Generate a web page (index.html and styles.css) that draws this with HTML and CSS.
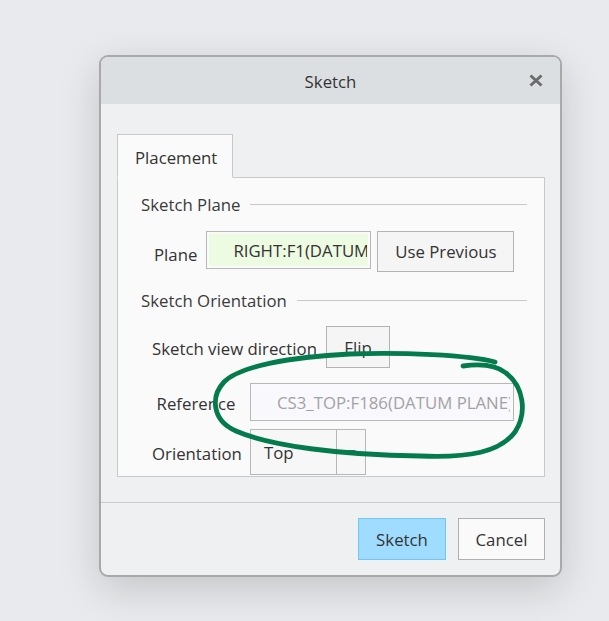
FILE: index.html
```html
<!DOCTYPE html>
<html>
<head>
<meta charset="utf-8">
<link rel="stylesheet" href="styles.css">
</head>
<body>
<div class="dialog">
  <div class="titlebar">
    <span></span>
    <span class="title">Sketch</span>
    <span class="close">
      <svg width="14" height="13" viewBox="0 0 14 13"><path d="M1.5 1.5 L12.5 11.5 M12.5 1.5 L1.5 11.5" stroke="#6b6b6b" stroke-width="3" fill="none"/></svg>
    </span>
  </div>
  <div class="content">
    <div class="tab">Placement</div>
    <div class="panel">
      <div class="section"><span>Sketch Plane</span><i class="rule"></i></div>
      <div class="row row-plane">
        <span class="label">Plane</span>
        <div class="field field-green"><span class="ftext">RIGHT:F1(DATUM PLANE)</span></div>
        <button class="btn btn-prev">Use Previous</button>
      </div>
      <div class="section sec2"><span>Sketch Orientation</span><i class="rule"></i></div>
      <div class="row row-flip">
        <span class="label">Sketch view direction</span>
        <button class="btn btn-flip">Flip</button>
      </div>
      <div class="grid">
        <span class="glabel lab-ref">Reference</span>
        <div class="field field-ref"><span class="ftext">CS3_TOP:F186(DATUM PLANE)</span></div>
        <span class="glabel">Orientation</span>
        <div class="select"><span class="sel-text">Top</span><span class="sel-arrow"><i class="tri"></i></span></div>
      </div>
    </div>
  </div>
  <div class="footer">
    <button class="btn btn-ok">Sketch</button>
    <button class="btn btn-cancel">Cancel</button>
  </div>
</div>
<svg class="ink" width="609" height="621" viewBox="0 0 609 621">
  <path d="M495 362 C470 355 400 352 350 354 C290 357 240 366 224 382 C211 396 211 420 236 431 C270 446 340 455 420 456 C470 458 500 452 515 432 C528 412 523 386 506 373 C495 364 478 364 463 366" fill="none" stroke="#037b4c" stroke-width="4.8" stroke-linecap="round" stroke-linejoin="round"/>
</svg>
</body>
</html>
```
FILE: styles.css
```css
* { box-sizing: border-box; }
html, body { margin: 0; padding: 0; }
body {
  width: 609px;
  height: 621px;
  overflow: hidden;
  background: #e9eaed;
  font-family: "Open Sans", "Noto Sans", sans-serif;
  font-size: 16.8px;
  color: #333;
}
.dialog {
  margin: 55px 0 0 99px;
  width: 463px;
  height: 522px;
  border: 2px solid #a9a9aa;
  border-radius: 9px;
  background: #eff0f2;
  box-shadow: 0 12px 40px rgba(0,0,0,0.16);
  overflow: hidden;
  display: flex;
  flex-direction: column;
}
.titlebar {
  height: 47px;
  background: #dcdfe1;
  display: grid;
  grid-template-columns: 1fr auto 1fr;
  align-items: center;
}
.title { color: #333; padding-top: 1px; }
.close { justify-self: end; padding-right: 17px; display: flex; }
.content { padding: 30px 15px 0 16px; }
.tab {
  position: relative;
  z-index: 1;
  width: 116px;
  height: 44px;
  margin-bottom: -1px;
  padding: 11px 0 0 17px;
  background: #fafafa;
  border: 1px solid #c9c9c9;
  border-bottom: 1px solid #fafafa;
}
.panel {
  height: 300px;
  background: #fafafa;
  border: 1px solid #c9c9c9;
  padding: 15px 17px 0 23px;
}
.section {
  display: flex;
  align-items: center;
  height: 22px;
  color: #3a3a3a;
}
.rule {
  flex: 1;
  height: 1px;
  background: #c8c8c8;
  margin-left: 10px;
}
.sec2 { margin-top: 17px; }
.row { display: flex; align-items: center; }
.row-plane { margin-top: 16px; height: 41px; padding-left: 13px; align-items: flex-start; }
.row-plane .label { padding-top: 12px; margin-right: 9px; }
.field {
  height: 38px;
  border: 1px solid #b7b7b7;
  box-shadow: inset 0 0 0 2px #fafafa;
  display: flex;
  align-items: center;
  padding-left: 26px;
  padding-right: 3px;
  overflow: hidden;
  white-space: nowrap;
}
.ftext { display: block; flex: 1; min-width: 0; overflow: hidden; }
.field-green { width: 165px; background: #edfbe2; }
.field-ref { width: 264px; background: #f9f8fd; color: #a2a2a2; }
.btn {
  font-family: inherit;
  font-size: 16.8px;
  color: #333;
  background: #f5f5f5;
  border: 1px solid #b3b3b3;
  border-radius: 0;
  padding: 0;
}
.btn-prev { width: 137px; height: 41px; margin-left: 6px; }
.row-flip { margin-top: 15px; height: 42px; padding-left: 11px; }
.row-flip .label { margin-right: 9px; padding-top: 3px; }
.btn-flip { width: 64px; height: 42px; }
.grid {
  margin-top: 15px;
  display: grid;
  grid-template-columns: 88px auto;
  column-gap: 10px;
  row-gap: 8px;
  padding-left: 11px;
  align-items: center;
}
.glabel { text-align: center; padding-top: 2px; white-space: nowrap; }
.select {
  width: 116px;
  height: 46px;
  display: flex;
  border: 1px solid #b7b7b7;
  background: #f7f7f7;
}
.sel-text { flex: 1; display: flex; align-items: center; padding-left: 13px; }
.sel-arrow {
  width: 29px;
  border-left: 1px solid #b7b7b7;
  display: flex;
  align-items: center;
  justify-content: center;
}
.tri {
  width: 0; height: 0;
  border-left: 5px solid transparent;
  border-right: 5px solid transparent;
  border-top: 4px solid #6b6b6b;
}
.footer {
  margin-top: 25px;
  border-top: 1px solid #c9cbce;
  padding: 15px 15px 0 0;
  display: flex;
  justify-content: flex-end;
  gap: 12px;
}
.btn-ok { width: 88px; height: 42px; background: #a0dcff; border-color: #71c6f2; }
.btn-cancel { width: 87px; height: 42px; background: #fafafa; border-color: #b0b0b0; }
.ink { position: absolute; left: 0; top: 0; pointer-events: none; }
```
